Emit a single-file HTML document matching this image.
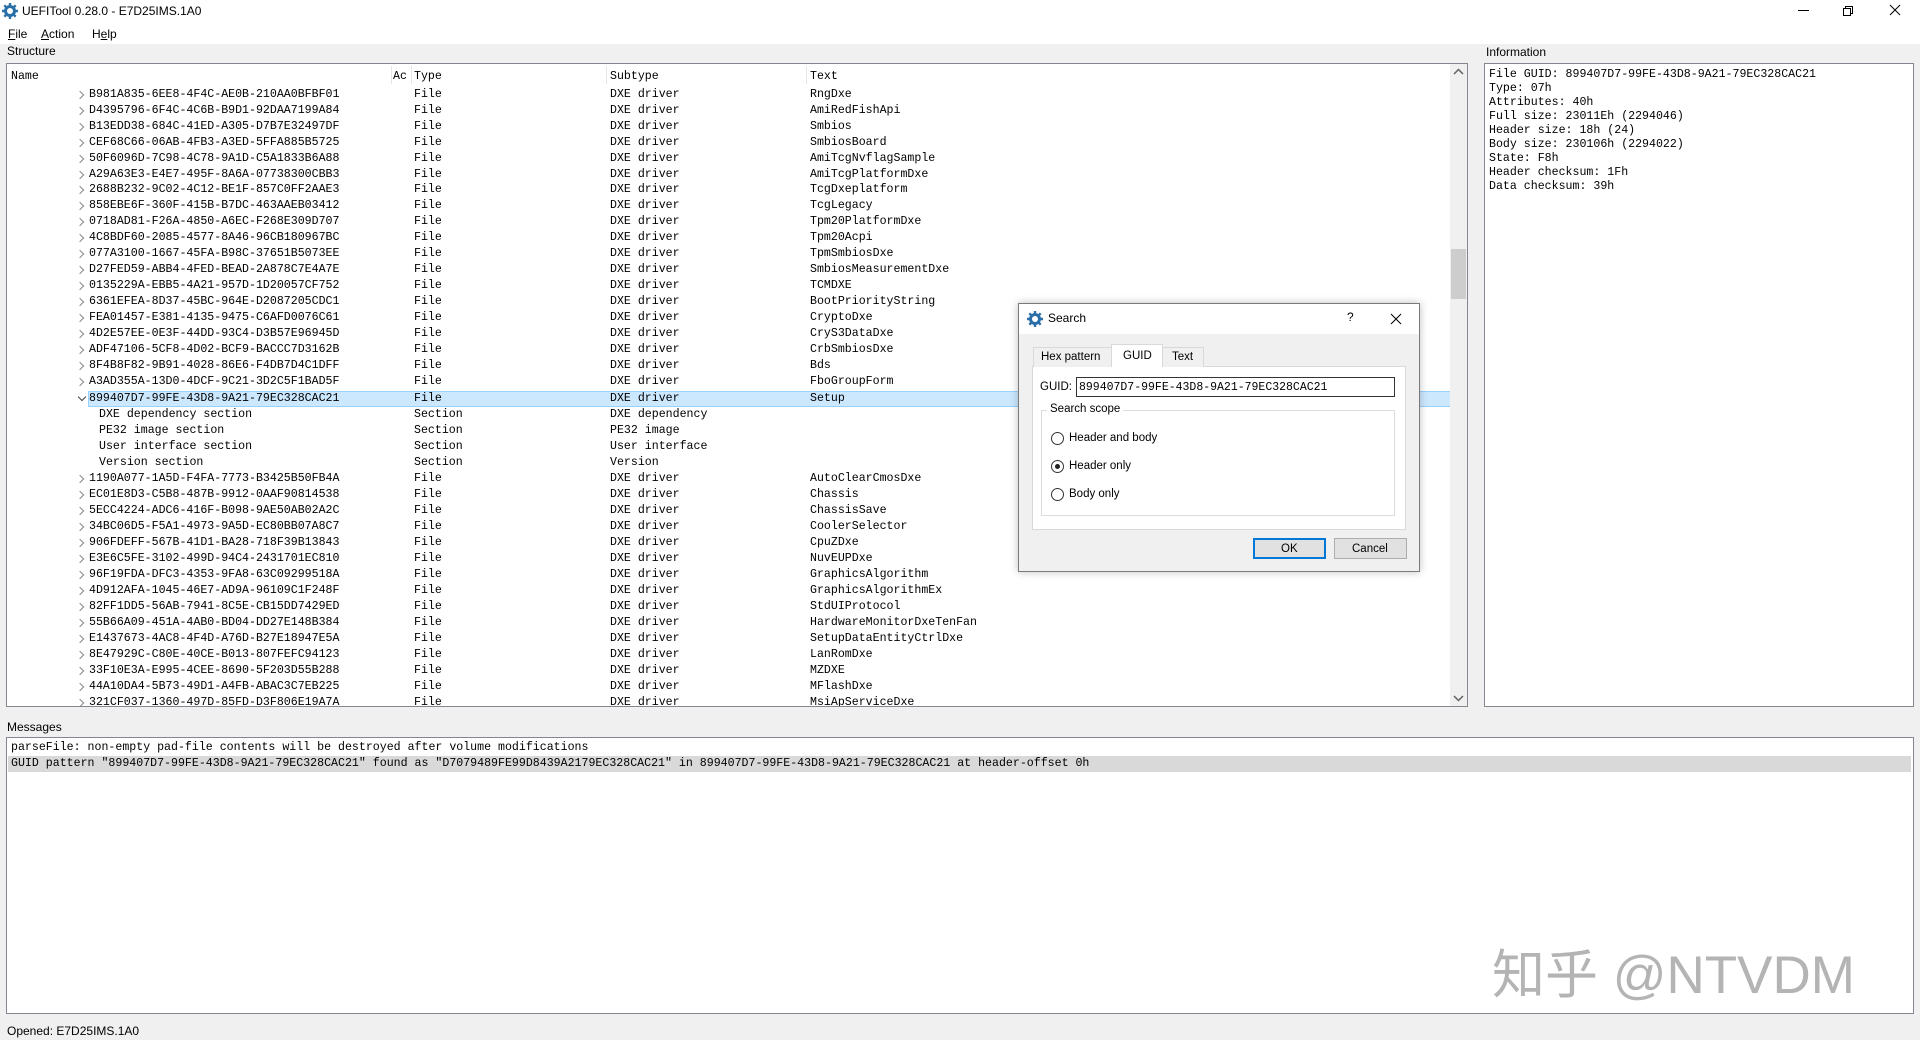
<!DOCTYPE html>
<html><head><meta charset="utf-8">
<style>
*{margin:0;padding:0;box-sizing:border-box}
body{width:1920px;height:1040px;position:relative;overflow:hidden;background:#f0f0f0;font-family:"Liberation Sans",sans-serif;font-size:12px;color:#000}
.abs{position:absolute}
.mono{font-family:"Liberation Mono",monospace;font-size:11.6px;white-space:pre}
.ui{font-family:"Liberation Sans",sans-serif;font-size:12px;white-space:nowrap}
.row{position:absolute;left:0;width:1440px;height:16px;line-height:16px}
.row span{position:absolute;top:0}
.row span.a{left:77px;top:5px;width:6px;height:6px;border-right:1px solid #8a8a8a;border-top:1px solid #8a8a8a;transform:rotate(45deg);font-size:0}
.row span.a.o{left:79px;top:3px;transform:rotate(135deg);border-color:#444}
.g{left:89px}.c{left:99px}.t{left:414px}.s{left:610px}.x{left:810px}
</style></head><body>
<div class="abs" style="left:0;top:0;width:1920px;height:44px;background:#fff"></div>
<svg class="abs" style="left:2px;top:3px" width="16" height="16" viewBox="0 0 16 16"><circle cx="8" cy="8" r="6" fill="#2a6fa8"/><g stroke="#2a6fa8" stroke-width="2.4"><path d="M8 0v16M0 8h16M2.3 2.3l11.4 11.4M13.7 2.3L2.3 13.7"/></g><circle cx="8" cy="8" r="3" fill="#fff"/></svg>
<div class="abs ui" style="left:22px;top:4px">UEFITool 0.28.0 - E7D25IMS.1A0</div>
<div class="abs" style="left:1798px;top:10px;width:11px;height:1px;background:#000"></div>
<div class="abs" style="left:1845px;top:6px;width:8px;height:8px;border:1px solid #000"></div>
<div class="abs" style="left:1843px;top:8px;width:8px;height:8px;border:1px solid #000;background:#fff"></div>
<svg class="abs" style="left:1889px;top:4px" width="12" height="12"><path d="M1 1L11 11M11 1L1 11" stroke="#000" stroke-width="1"/></svg>
<div class="abs ui" style="left:8px;top:27px"><u>F</u>ile</div>
<div class="abs ui" style="left:41px;top:27px"><u>A</u>ction</div>
<div class="abs ui" style="left:92px;top:27px">H<u>e</u>lp</div>

<div class="abs ui" style="left:7px;top:44px">Structure</div>
<div class="abs" style="left:6px;top:63px;width:1462px;height:644px;background:#fff;border:1px solid #828790"></div>
<div class="abs" style="left:1450px;top:64px;width:17px;height:642px;background:#f0f0f0"></div>
<div class="abs" style="left:1451px;top:249px;width:15px;height:50px;background:#cdcdcd"></div>
<svg class="abs" style="left:1453px;top:68px" width="11" height="8"><path d="M1 6L5.5 1.5L10 6" fill="none" stroke="#606060" stroke-width="1.5"/></svg>
<svg class="abs" style="left:1453px;top:694px" width="11" height="8"><path d="M1 2L5.5 6.5L10 2" fill="none" stroke="#606060" stroke-width="1.5"/></svg>
<div class="abs" style="left:7px;top:64px;width:1443px;height:642px;overflow:hidden">
 <div class="row mono" style="top:5px;color:#000"><span style="left:4px">Name</span><span style="left:386px">Ac</span><span style="left:407px">Type</span><span style="left:603px">Subtype</span><span style="left:803px">Text</span></div>
 <div class="abs" style="left:384px;top:2px;width:1px;height:18px;background:#e5e5e5"></div>
 <div class="abs" style="left:404px;top:2px;width:1px;height:18px;background:#e5e5e5"></div>
 <div class="abs" style="left:599px;top:2px;width:1px;height:18px;background:#e5e5e5"></div>
 <div class="abs" style="left:799px;top:2px;width:1px;height:18px;background:#e5e5e5"></div>
 <div class="abs" style="left:81px;top:327px;width:1367px;height:16px;background:#cce8ff;border:1px solid #99d1ff"></div>
 <div class="abs mono" style="left:0;top:0;width:1443px;height:642px;transform:translate(-7px,-62px)">
<div class="row" style="top:85px"><span class="a"></span><span class="g">B981A835-6EE8-4F4C-AE0B-210AA0BFBF01</span><span class="t">File</span><span class="s">DXE driver</span><span class="x">RngDxe</span></div>
<div class="row" style="top:101px"><span class="a"></span><span class="g">D4395796-6F4C-4C6B-B9D1-92DAA7199A84</span><span class="t">File</span><span class="s">DXE driver</span><span class="x">AmiRedFishApi</span></div>
<div class="row" style="top:117px"><span class="a"></span><span class="g">B13EDD38-684C-41ED-A305-D7B7E32497DF</span><span class="t">File</span><span class="s">DXE driver</span><span class="x">Smbios</span></div>
<div class="row" style="top:133px"><span class="a"></span><span class="g">CEF68C66-06AB-4FB3-A3ED-5FFA885B5725</span><span class="t">File</span><span class="s">DXE driver</span><span class="x">SmbiosBoard</span></div>
<div class="row" style="top:149px"><span class="a"></span><span class="g">50F6096D-7C98-4C78-9A1D-C5A1833B6A88</span><span class="t">File</span><span class="s">DXE driver</span><span class="x">AmiTcgNvflagSample</span></div>
<div class="row" style="top:165px"><span class="a"></span><span class="g">A29A63E3-E4E7-495F-8A6A-07738300CBB3</span><span class="t">File</span><span class="s">DXE driver</span><span class="x">AmiTcgPlatformDxe</span></div>
<div class="row" style="top:180px"><span class="a"></span><span class="g">2688B232-9C02-4C12-BE1F-857C0FF2AAE3</span><span class="t">File</span><span class="s">DXE driver</span><span class="x">TcgDxeplatform</span></div>
<div class="row" style="top:196px"><span class="a"></span><span class="g">858EBE6F-360F-415B-B7DC-463AAEB03412</span><span class="t">File</span><span class="s">DXE driver</span><span class="x">TcgLegacy</span></div>
<div class="row" style="top:212px"><span class="a"></span><span class="g">0718AD81-F26A-4850-A6EC-F268E309D707</span><span class="t">File</span><span class="s">DXE driver</span><span class="x">Tpm20PlatformDxe</span></div>
<div class="row" style="top:228px"><span class="a"></span><span class="g">4C8BDF60-2085-4577-8A46-96CB180967BC</span><span class="t">File</span><span class="s">DXE driver</span><span class="x">Tpm20Acpi</span></div>
<div class="row" style="top:244px"><span class="a"></span><span class="g">077A3100-1667-45FA-B98C-37651B5073EE</span><span class="t">File</span><span class="s">DXE driver</span><span class="x">TpmSmbiosDxe</span></div>
<div class="row" style="top:260px"><span class="a"></span><span class="g">D27FED59-ABB4-4FED-BEAD-2A878C7E4A7E</span><span class="t">File</span><span class="s">DXE driver</span><span class="x">SmbiosMeasurementDxe</span></div>
<div class="row" style="top:276px"><span class="a"></span><span class="g">0135229A-EBB5-4A21-957D-1D20057CF752</span><span class="t">File</span><span class="s">DXE driver</span><span class="x">TCMDXE</span></div>
<div class="row" style="top:292px"><span class="a"></span><span class="g">6361EFEA-8D37-45BC-964E-D2087205CDC1</span><span class="t">File</span><span class="s">DXE driver</span><span class="x">BootPriorityString</span></div>
<div class="row" style="top:308px"><span class="a"></span><span class="g">FEA01457-E381-4135-9475-C6AFD0076C61</span><span class="t">File</span><span class="s">DXE driver</span><span class="x">CryptoDxe</span></div>
<div class="row" style="top:324px"><span class="a"></span><span class="g">4D2E57EE-0E3F-44DD-93C4-D3B57E96945D</span><span class="t">File</span><span class="s">DXE driver</span><span class="x">CryS3DataDxe</span></div>
<div class="row" style="top:340px"><span class="a"></span><span class="g">ADF47106-5CF8-4D02-BCF9-BACCC7D3162B</span><span class="t">File</span><span class="s">DXE driver</span><span class="x">CrbSmbiosDxe</span></div>
<div class="row" style="top:356px"><span class="a"></span><span class="g">8F4B8F82-9B91-4028-86E6-F4DB7D4C1DFF</span><span class="t">File</span><span class="s">DXE driver</span><span class="x">Bds</span></div>
<div class="row" style="top:372px"><span class="a"></span><span class="g">A3AD355A-13D0-4DCF-9C21-3D2C5F1BAD5F</span><span class="t">File</span><span class="s">DXE driver</span><span class="x">FboGroupForm</span></div>
<div class="row" style="top:389px"><span class="a o"></span><span class="g">899407D7-99FE-43D8-9A21-79EC328CAC21</span><span class="t">File</span><span class="s">DXE driver</span><span class="x">Setup</span></div>
<div class="row" style="top:405px"><span class="c">DXE dependency section</span><span class="t">Section</span><span class="s">DXE dependency</span></div>
<div class="row" style="top:421px"><span class="c">PE32 image section</span><span class="t">Section</span><span class="s">PE32 image</span></div>
<div class="row" style="top:437px"><span class="c">User interface section</span><span class="t">Section</span><span class="s">User interface</span></div>
<div class="row" style="top:453px"><span class="c">Version section</span><span class="t">Section</span><span class="s">Version</span></div>
<div class="row" style="top:469px"><span class="a"></span><span class="g">1190A077-1A5D-F4FA-7773-B3425B50FB4A</span><span class="t">File</span><span class="s">DXE driver</span><span class="x">AutoClearCmosDxe</span></div>
<div class="row" style="top:485px"><span class="a"></span><span class="g">EC01E8D3-C5B8-487B-9912-0AAF90814538</span><span class="t">File</span><span class="s">DXE driver</span><span class="x">Chassis</span></div>
<div class="row" style="top:501px"><span class="a"></span><span class="g">5ECC4224-ADC6-416F-B098-9AE50AB02A2C</span><span class="t">File</span><span class="s">DXE driver</span><span class="x">ChassisSave</span></div>
<div class="row" style="top:517px"><span class="a"></span><span class="g">34BC06D5-F5A1-4973-9A5D-EC80BB07A8C7</span><span class="t">File</span><span class="s">DXE driver</span><span class="x">CoolerSelector</span></div>
<div class="row" style="top:533px"><span class="a"></span><span class="g">906FDEFF-567B-41D1-BA28-718F39B13843</span><span class="t">File</span><span class="s">DXE driver</span><span class="x">CpuZDxe</span></div>
<div class="row" style="top:549px"><span class="a"></span><span class="g">E3E6C5FE-3102-499D-94C4-2431701EC810</span><span class="t">File</span><span class="s">DXE driver</span><span class="x">NuvEUPDxe</span></div>
<div class="row" style="top:565px"><span class="a"></span><span class="g">96F19FDA-DFC3-4353-9FA8-63C09299518A</span><span class="t">File</span><span class="s">DXE driver</span><span class="x">GraphicsAlgorithm</span></div>
<div class="row" style="top:581px"><span class="a"></span><span class="g">4D912AFA-1045-46E7-AD9A-96109C1F248F</span><span class="t">File</span><span class="s">DXE driver</span><span class="x">GraphicsAlgorithmEx</span></div>
<div class="row" style="top:597px"><span class="a"></span><span class="g">82FF1DD5-56AB-7941-8C5E-CB15DD7429ED</span><span class="t">File</span><span class="s">DXE driver</span><span class="x">StdUIProtocol</span></div>
<div class="row" style="top:613px"><span class="a"></span><span class="g">55B66A09-451A-4AB0-BD04-DD27E148B384</span><span class="t">File</span><span class="s">DXE driver</span><span class="x">HardwareMonitorDxeTenFan</span></div>
<div class="row" style="top:629px"><span class="a"></span><span class="g">E1437673-4AC8-4F4D-A76D-B27E18947E5A</span><span class="t">File</span><span class="s">DXE driver</span><span class="x">SetupDataEntityCtrlDxe</span></div>
<div class="row" style="top:645px"><span class="a"></span><span class="g">8E47929C-C80E-40CE-B013-807FEFC94123</span><span class="t">File</span><span class="s">DXE driver</span><span class="x">LanRomDxe</span></div>
<div class="row" style="top:661px"><span class="a"></span><span class="g">33F10E3A-E995-4CEE-8690-5F203D55B288</span><span class="t">File</span><span class="s">DXE driver</span><span class="x">MZDXE</span></div>
<div class="row" style="top:677px"><span class="a"></span><span class="g">44A10DA4-5B73-49D1-A4FB-ABAC3C7EB225</span><span class="t">File</span><span class="s">DXE driver</span><span class="x">MFlashDxe</span></div>
<div class="row" style="top:693px"><span class="a"></span><span class="g">321CF037-1360-497D-85FD-D3F806E19A7A</span><span class="t">File</span><span class="s">DXE driver</span><span class="x">MsiApServiceDxe</span></div>
 </div>
</div>

<div class="abs ui" style="left:1486px;top:45px">Information</div>
<div class="abs" style="left:1484px;top:63px;width:430px;height:644px;background:#fff;border:1px solid #828790"></div>
<div class="abs mono" style="left:1489px;top:68px;line-height:14px">File GUID: 899407D7-99FE-43D8-9A21-79EC328CAC21
Type: 07h
Attributes: 40h
Full size: 23011Eh (2294046)
Header size: 18h (24)
Body size: 230106h (2294022)
State: F8h
Header checksum: 1Fh
Data checksum: 39h</div>

<div class="abs ui" style="left:7px;top:720px">Messages</div>
<div class="abs" style="left:6px;top:737px;width:1908px;height:277px;background:#fff;border:1px solid #828790"></div>
<div class="abs" style="left:8px;top:756px;width:1903px;height:16px;background:#d9d9d9"></div>
<div class="abs mono" style="left:11px;top:740px;line-height:16px">parseFile: non-empty pad-file contents will be destroyed after volume modifications
GUID pattern "899407D7-99FE-43D8-9A21-79EC328CAC21" found as "D7079489FE99D8439A2179EC328CAC21" in 899407D7-99FE-43D8-9A21-79EC328CAC21 at header-offset 0h</div>
<div class="abs" style="left:1492px;top:933px;font-family:'Liberation Sans','Noto Sans CJK SC',sans-serif;font-size:53px;color:#b4b4b4;white-space:nowrap">知乎 @NTVDM</div>
<div class="abs ui" style="left:7px;top:1024px">Opened: E7D25IMS.1A0</div>

<div class="abs" style="left:1018px;top:303px;width:402px;height:269px;background:#f0f0f0;border:1px solid #7a7a7a;box-shadow:0 0 8px rgba(0,0,0,.25)"></div>
<div class="abs" style="left:1019px;top:304px;width:400px;height:30px;background:#fff"></div>
<svg class="abs" style="left:1027px;top:311px" width="16" height="16" viewBox="0 0 16 16"><circle cx="8" cy="8" r="6" fill="#2a6fa8"/><g stroke="#2a6fa8" stroke-width="2.4"><path d="M8 0v16M0 8h16M2.3 2.3l11.4 11.4M13.7 2.3L2.3 13.7"/></g><circle cx="8" cy="8" r="3" fill="#fff"/></svg>
<div class="abs ui" style="left:1048px;top:311px">Search</div>
<div class="abs ui" style="left:1347px;top:310px">?</div>
<svg class="abs" style="left:1390px;top:313px" width="12" height="12"><path d="M1 1L11 11M11 1L1 11" stroke="#000" stroke-width="1"/></svg>
<div class="abs" style="left:1032px;top:366px;width:374px;height:164px;background:#fff;border:1px solid #d9d9d9"></div>
<div class="abs" style="left:1033px;top:347px;width:79px;height:20px;background:#f0f0f0;border:1px solid #d9d9d9;border-bottom:none"></div>
<div class="abs ui" style="left:1041px;top:351px;font-size:11.5px">Hex pattern</div>
<div class="abs" style="left:1111px;top:344px;width:52px;height:23px;background:#fff;border:1px solid #d9d9d9;border-bottom:none"></div>
<div class="abs ui" style="left:1123px;top:350px;font-size:11.5px">GUID</div>
<div class="abs" style="left:1162px;top:347px;width:42px;height:20px;background:#f0f0f0;border:1px solid #d9d9d9;border-bottom:none"></div>
<div class="abs ui" style="left:1172px;top:351px;font-size:11.5px">Text</div>
<div class="abs ui" style="left:1040px;top:381px;font-size:11.5px">GUID:</div>
<div class="abs" style="left:1076px;top:377px;width:319px;height:20px;background:#fff;border:1px solid #333"></div>
<div class="abs mono" style="left:1079px;top:381px;font-size:11.5px">899407D7-99FE-43D8-9A21-79EC328CAC21</div>
<div class="abs" style="left:1041px;top:410px;width:354px;height:106px;border:1px solid #dcdcdc"></div>
<div class="abs ui" style="left:1047px;top:403px;background:#fff;padding:0 3px;font-size:11.5px">Search scope</div>
<div class="abs" style="left:1051px;top:432px;width:13px;height:13px;border:1px solid #333;border-radius:50%;background:#fff"></div>
<div class="abs ui" style="left:1069px;top:432px;font-size:11.5px">Header and body</div>
<div class="abs" style="left:1051px;top:460px;width:13px;height:13px;border:1px solid #333;border-radius:50%;background:#fff"></div>
<div class="abs" style="left:1055px;top:464px;width:5px;height:5px;border-radius:50%;background:#222"></div>
<div class="abs ui" style="left:1069px;top:460px;font-size:11.5px">Header only</div>
<div class="abs" style="left:1051px;top:488px;width:13px;height:13px;border:1px solid #333;border-radius:50%;background:#fff"></div>
<div class="abs ui" style="left:1069px;top:488px;font-size:11.5px">Body only</div>
<div class="abs" style="left:1253px;top:538px;width:73px;height:21px;background:#e1e1e1;border:2px solid #0078d7"></div>
<div class="abs ui" style="left:1281px;top:543px;font-size:11.5px">OK</div>
<div class="abs" style="left:1334px;top:538px;width:73px;height:21px;background:#e1e1e1;border:1px solid #adadad"></div>
<div class="abs ui" style="left:1352px;top:543px;font-size:11.5px">Cancel</div>
</body></html>
